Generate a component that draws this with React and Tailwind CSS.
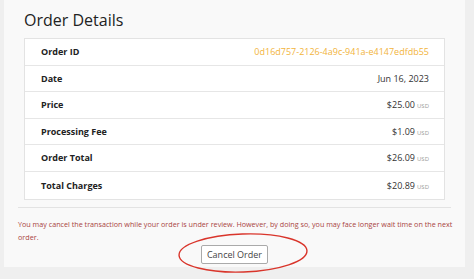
import React from "react";

const rows = [
  { label: "Order ID", value: "0d16d757-2126-4a9c-941a-e4147edfdb55", id: true },
  { label: "Date", value: "Jun 16, 2023" },
  { label: "Price", value: "$25.00", usd: true },
  { label: "Processing Fee", value: "$1.09", usd: true },
  { label: "Order Total", value: "$26.09", usd: true },
  { label: "Total Charges", value: "$20.89", usd: true },
];

export default function App() {
  return (
    <div
      className="w-[474px] h-[279px] bg-[#efefef] pl-[4px] pr-[9px] pb-[12px] overflow-hidden"
      style={{ fontFamily: '"Open Sans", sans-serif' }}
    >
      <div className="relative h-full bg-[#f9f9f9] px-[14px] pt-[9px]">
        <h1 className="pl-[6px] text-[16px] leading-[22px] text-[#222]">Order Details</h1>
        <div className="mx-[6px] mt-[7px] border border-[#e3e3e3] bg-white">
          {rows.map((r, i) => (
            <div
              key={r.label}
              className={
                "flex items-center justify-between h-[26.6px] pl-[16px] pr-[15px] " +
                (i < rows.length - 1 ? "border-b border-[#e6e6e6]" : "")
              }
            >
              <span className="text-[9px] font-bold text-[#222]">{r.label}</span>
              {r.id ? (
                <span className="text-[9px] text-[#f2b43c]">{r.value}</span>
              ) : (
                <span className="text-[9px] text-[#333]">
                  {r.value}
                  {r.usd && <span className="ml-[2px] text-[6px] text-[#999]">USD</span>}
                </span>
              )}
            </div>
          ))}
        </div>
        <div className="mt-[7px] border-t border-[#e3e3e3]" />
        <p className="mt-[10px] mr-[-4px] text-[7.2px] leading-[13.5px] text-[#a9443f]">
          You may cancel the transaction while your order is under review. However, by doing so, you may face longer wait time on the next order.
        </p>
        <div className="flex justify-center">
          <button className="h-[19px] px-[5px] border border-[#aaa] rounded-[2px] bg-white text-[9px] leading-none text-[#444]">
            Cancel Order
          </button>
        </div>
        <svg
          className="absolute left-[172px] top-[231px]"
          width="134"
          height="44"
          viewBox="0 0 134 44"
        >
          <ellipse cx="67" cy="22" rx="64" ry="19" fill="none" stroke="#d9352b" strokeWidth="1.4" transform="rotate(-2 67 22)" />
        </svg>
      </div>
    </div>
  );
}
